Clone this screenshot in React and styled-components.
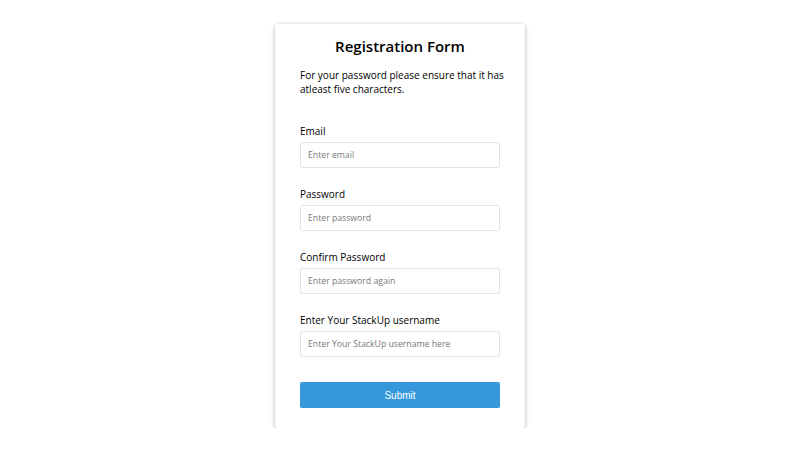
import React from "react";
import styled, { createGlobalStyle } from "styled-components";

const Global = createGlobalStyle`
  html, body { margin: 0; padding: 0; background: #ffffff; }
  body { font-family: "Open Sans", "Noto Sans", sans-serif; color: #000; }
  * { box-sizing: border-box; }
`;

const Page = styled.div`
  display: flex;
  justify-content: center;
  padding-top: 24px;
`;

const Card = styled.form`
  width: 250px;
  padding: 12px 25px 20px 25px;
  background: #fff;
  border-radius: 3px;
  box-shadow: 0 1px 4px rgba(0, 0, 0, 0.3);
  display: flex;
  flex-direction: column;
`;

const Title = styled.h1`
  margin: 0;
  font-size: 15px;
  font-weight: 600;
  text-align: center;
  line-height: 20px;
  color: #000;
`;

const Intro = styled.p`
  margin: 12px -12px 28px 0;
  font-size: 10px;
  line-height: 14px;
  color: #000;
`;

const Field = styled.div`
  display: flex;
  flex-direction: column;
  margin-bottom: 19px;
`;

const Label = styled.label`
  font-size: 10px;
  line-height: 14px;
  margin-bottom: 4px;
  color: #000;
`;

const Input = styled.input`
  width: 200px;
  height: 26px;
  margin: 0;
  border: 1px solid #e4e4e4;
  border-radius: 2px;
  padding: 0 7px;
  font-family: "Open Sans", sans-serif;
  font-size: 8.7px;
  color: #333;
  outline: none;
  &::placeholder { color: #777; }
`;

const Submit = styled.button`
  margin-top: 6px;
  width: 200px;
  height: 26px;
  border: none;
  border-radius: 2px;
  background: #3498db;
  color: #fff;
  font-family: "Liberation Sans", Arial, sans-serif;
  font-size: 10px;
  cursor: pointer;
`;

const fields = [
  { label: "Email", placeholder: "Enter email", type: "email" },
  { label: "Password", placeholder: "Enter password", type: "password" },
  { label: "Confirm Password", placeholder: "Enter password again", type: "password" },
  { label: "Enter Your StackUp username", placeholder: "Enter Your StackUp username here", type: "text" },
];

export default function App() {
  return (
    <>
      <Global />
      <Page>
        <Card onSubmit={(e) => e.preventDefault()}>
          <Title>Registration Form</Title>
          <Intro>For your password please ensure that it has atleast five characters.</Intro>
          {fields.map((f) => (
            <Field key={f.label}>
              <Label>{f.label}</Label>
              <Input type={f.type} placeholder={f.placeholder} />
            </Field>
          ))}
          <Submit type="submit">Submit</Submit>
        </Card>
      </Page>
    </>
  );
}
